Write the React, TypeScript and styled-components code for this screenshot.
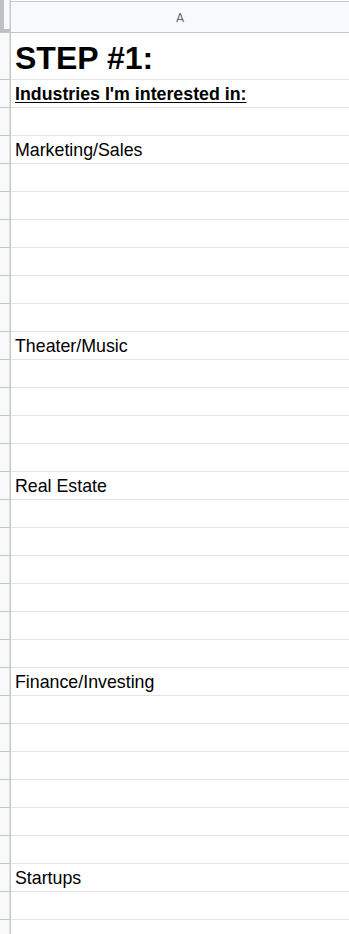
import styled, { createGlobalStyle } from 'styled-components';

const GlobalStyle = createGlobalStyle`
  html, body {
    margin: 0;
    padding: 0;
    background: #fff;
    overflow: hidden;
  }
`;

type RowKind = 'title' | 'subtitle' | 'plain';

interface Row {
  text: string;
  kind: RowKind;
}

const labels: Record<number, string> = {
  1: 'Marketing/Sales',
  8: 'Theater/Music',
  13: 'Real Estate',
  20: 'Finance/Investing',
  27: 'Startups',
};

const rows: Row[] = [
  { text: 'STEP #1:', kind: 'title' },
  { text: "Industries I'm interested in:", kind: 'subtitle' },
  ...Array.from({ length: 30 }, (_, i) => ({
    text: labels[i] ?? '',
    kind: 'plain' as RowKind,
  })),
];

const App = () => {
  return (
    <>
      <GlobalStyle />
      <Sheet>
        <HeaderRow>
          <Corner>
            <CornerTop>
              <FreezeCol />
            </CornerTop>
            <FreezeRow />
          </Corner>
          <ColumnHeader>A</ColumnHeader>
        </HeaderRow>
        {rows.map((row, i) => (
          <SheetRow key={i} $tall={row.kind === 'title'}>
            <RowNumber />
            <Cell $kind={row.kind}>
              {row.kind === 'subtitle' ? <u>{row.text}</u> : row.text}
            </Cell>
          </SheetRow>
        ))}
      </Sheet>
    </>
  );
};

export default App;

const Sheet = styled.div`
  width: 349px;
  height: 934px;
  overflow: hidden;
  display: flex;
  flex-direction: column;
  background: #fff;
`;

const HeaderRow = styled.div`
  display: flex;
  height: 33px;
  flex-shrink: 0;
`;

const Corner = styled.div`
  width: 11px;
  box-sizing: border-box;
  display: flex;
  flex-direction: column;
  background: #f8f9fa;
  border-right: 1px solid #c4c7c5;
  border-bottom: 1px solid #c4c7c5;
  box-shadow: inset -1px 0 0 #e1e3e1;
`;

const CornerTop = styled.div`
  flex: 1;
  display: flex;
`;

const FreezeCol = styled.div`
  width: 4px;
  background: #bdc1c6;
`;

const FreezeRow = styled.div`
  height: 3px;
  width: 10px;
  background: #bdc1c6;
`;

const ColumnHeader = styled.div`
  flex: 1;
  margin-top: 1px;
  box-sizing: border-box;
  border-top: 1px solid #c4c7c5;
  border-bottom: 1px solid #c4c7c5;
  background: #f8f9fa;
  display: flex;
  align-items: center;
  justify-content: center;
  padding-top: 1px;
  font-family: Roboto, 'Liberation Sans', sans-serif;
  font-size: 12.5px;
  color: #5f6368;
`;

const SheetRow = styled.div<{ $tall: boolean }>`
  display: flex;
  flex-shrink: 0;
  height: ${(p) => (p.$tall ? '47px' : '28px')};
`;

const RowNumber = styled.div`
  width: 11px;
  box-sizing: border-box;
  background: #f8f9fa;
  border-right: 1px solid #c4c7c5;
  border-bottom: 1px solid #c4c7c5;
  box-shadow: inset -1px 0 0 #e1e3e1;
`;

const Cell = styled.div<{ $kind: RowKind }>`
  flex: 1;
  box-sizing: border-box;
  border-bottom: 1px solid #e2e3e3;
  display: flex;
  align-items: flex-end;
  padding: 0 4px 2px;
  font-family: 'Liberation Sans', Arial, sans-serif;
  color: #000;
  white-space: nowrap;
  font-size: ${(p) => (p.$kind === 'title' ? '32px' : '17.8px')};
  font-weight: ${(p) => (p.$kind === 'plain' ? 400 : 700)};
  line-height: normal;

  u {
    text-decoration-thickness: 1px;
    text-underline-offset: 2px;
  }
`;
